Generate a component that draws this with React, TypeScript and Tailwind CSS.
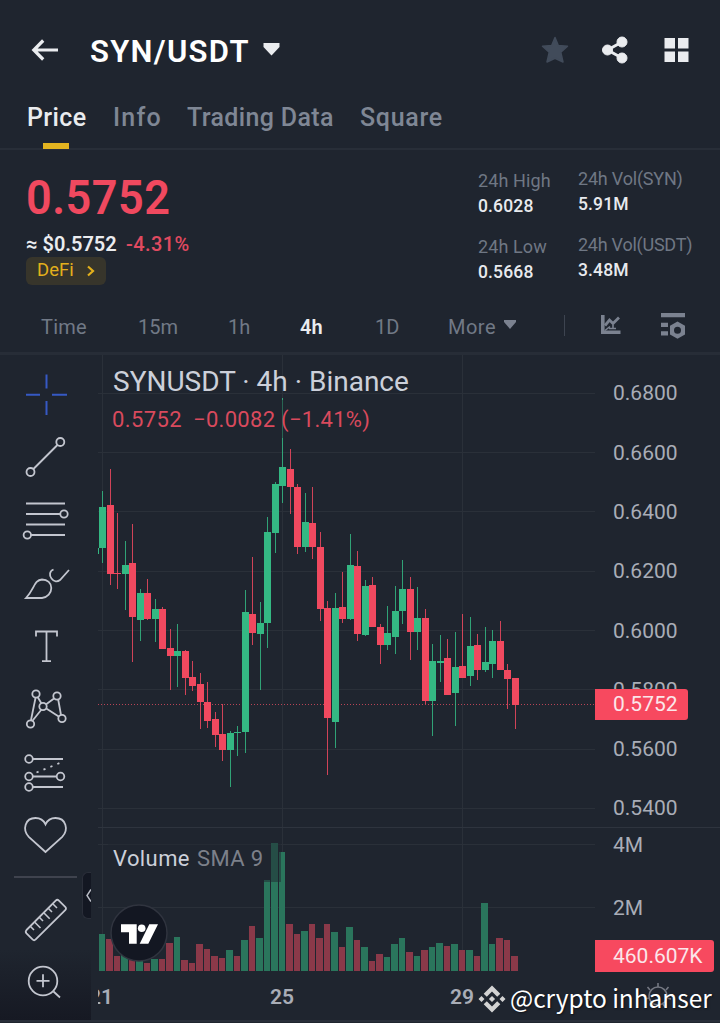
import React from "react";

type Candle = [dir: "u" | "d", high: number, top: number, bottom: number, low: number];

const UP = "#34b883";
const DOWN = "#f0495f";

const candles: Candle[] = [
  ["u", 491.3, 506.7, 548.3, 563.3],
  ["d", 469.3, 505.3, 574.3, 584.7],
  ["d", 513.3, 573, 574.3, 588.7],
  ["u", 540.7, 564.7, 574, 610],
  ["d", 524.3, 562.7, 617.3, 662.3],
  ["u", 588.7, 592.7, 619.7, 640.7],
  ["d", 579.3, 592.7, 619, 620],
  ["u", 599.3, 608.7, 618.7, 641.7],
  ["d", 607.3, 608.7, 648.7, 648.7],
  ["d", 629.3, 647.7, 655.7, 690.3],
  ["u", 624.3, 650.7, 655.7, 686.7],
  ["d", 650.3, 650.7, 677.7, 694.7],
  ["d", 661.3, 677, 685.7, 690.7],
  ["d", 673.3, 683.7, 702.3, 728.7],
  ["d", 682.3, 702.3, 721, 727.7],
  ["d", 712.3, 718.7, 735.3, 746.7],
  ["d", 704, 733.7, 749.7, 760.7],
  ["u", 731.3, 732.7, 750, 786.7],
  ["u", 726.3, 732, 733, 755.7],
  ["u", 590.3, 612.3, 732, 752.7],
  ["d", 557.3, 614.3, 632.7, 644.7],
  ["u", 601.7, 622.7, 633.7, 689.7],
  ["u", 517.3, 531.7, 623, 647.7],
  ["u", 481.7, 483.7, 532.7, 553.3],
  ["u", 398.3, 466.7, 485.7, 502.7],
  ["d", 448.7, 468.7, 487.3, 513.7],
  ["d", 483.7, 487.3, 547.3, 553.7],
  ["u", 492.7, 521.7, 547.3, 551.7],
  ["d", 487.3, 522.7, 547.3, 559.3],
  ["d", 531.7, 546.7, 608.7, 620.7],
  ["d", 601.3, 607.7, 717.7, 774.7],
  ["u", 593.3, 607.7, 721.7, 747.7],
  ["d", 572.3, 607.3, 618.7, 622.7],
  ["u", 534.3, 564.7, 618.7, 619.7],
  ["d", 551.3, 566.3, 634, 641.3],
  ["u", 580.3, 585.7, 634.7, 635.7],
  ["d", 577.3, 584.7, 627, 627],
  ["d", 623.7, 627.3, 644.7, 663.7],
  ["u", 605.7, 632.7, 644.7, 649.7],
  ["u", 586.3, 611.3, 636.7, 653.7],
  ["u", 560.3, 589.3, 610.7, 623.7],
  ["d", 577.3, 589.3, 631.7, 659.7],
  ["u", 586.7, 618.3, 631.7, 649.7],
  ["d", 609.3, 618.3, 700.7, 704.3],
  ["u", 643.7, 660.7, 700.7, 735.7],
  ["u", 635.3, 660.7, 663.3, 681.7],
  ["d", 639.3, 658.3, 694.7, 694.7],
  ["u", 632.3, 666.7, 692.7, 725.7],
  ["d", 614.3, 666.3, 677.7, 677.7],
  ["u", 617.3, 646.3, 676.3, 685.7],
  ["d", 634.3, 645.3, 669.7, 679.7],
  ["u", 627.3, 661.7, 669.7, 672.3],
  ["u", 630.3, 641.3, 663.7, 677.7],
  ["d", 621.3, 641.3, 669.7, 669.7],
  ["d", 664.3, 669.7, 678.7, 708.7],
  ["d", 678.3, 678.3, 704.7, 728.7],
];

const volumes = [
  37, 31.5, 15, 16, 12, 9.5, 7.5, 12, 11.5, 27.5, 33.5, 11, 7.5, 26.5, 21.5, 14.5, 12.5, 20.5, 15, 31, 45, 32.5,
  90.5, 128, 119, 47, 37, 40, 46.5, 32.5, 47, 39, 23.5, 43.5, 31, 23.5, 10, 17, 13.5, 27, 32.5, 18.5, 15, 20.5, 24,
  27.5, 25, 26.5, 20.5, 20.5, 15, 67.5, 26.5, 32.5, 30.5, 15,
];

const gridRows = [393, 452, 511, 571, 630, 689, 749, 808, 844, 907];

function Chart() {
  return (
    <svg className="block h-[665px] w-[622px]" viewBox="98 355 622 665" shapeRendering="crispEdges">
      {gridRows.map((y) => (
        <rect key={y} x={98} y={y} width={497} height={1} fill="#2a3039" />
      ))}
      {[102, 282, 462].map((x) => (
        <rect key={x} x={x} y={355} width={1} height={616} fill="#2a3039" />
      ))}
      <rect x={98} y={827} width={622} height={1} fill="#2e343e" />
      {volumes.map((h, i) => (
        <rect
          key={i}
          x={Math.floor(99 + 7.5 * i)}
          y={971 - Math.round(h)}
          width={i % 2 ? 7 : 6}
          height={Math.round(h)}
          fill={i === 18 || i === 6 ? "#8a3949" : candles[i][0] === "u" ? "#2a755c" : "#8a3949"}
        />
      ))}
      <line x1={98} x2={595} y1={704.5} y2={704.5} stroke="#b84456" strokeDasharray="1 2" />
      <rect x={98} y={548} width={1} height={6} fill={UP} />
      {candles.map(([dir, high, top, bottom, low], i) => {
        const x = 102 + Math.ceil(7.5 * i);
        const t = Math.round(top);
        const fill = dir === "u" ? UP : DOWN;
        return (
          <g key={i} fill={fill}>
            <rect x={x} y={Math.round(high)} width={1} height={Math.round(low) - Math.round(high)} opacity={0.85} />
            <rect x={x - 3} y={t} width={7} height={Math.max(1, Math.round(bottom) - t)} />
          </g>
        );
      })}
    </svg>
  );
}

function Tool({ cy, children }: { cy: number; children: React.ReactNode }) {
  return (
    <svg
      className="block h-[63px] w-[91px] shrink-0"
      viewBox={`0 ${cy - 31.5} 91 63`}
      fill="none"
      stroke="#c3c6cf"
      strokeWidth={1.8}
    >
      {children}
    </svg>
  );
}

function Toolbar() {
  return (
    <div className="relative flex h-[665px] w-[98px] shrink-0 flex-col pt-[8px]">
      <Tool cy={394.5}>
        <path d="M46.5 374.5v14M46.5 401v14M26 394.7h14M52 394.7h15" stroke="#3659c4" strokeWidth={2} />
      </Tool>
      <Tool cy={457.5}>
        <circle cx={60.3} cy={442} r={4} />
        <circle cx={30.5} cy={472} r={4} />
        <path d="M57.4 445 33.4 469" />
      </Tool>
      <Tool cy={520.5}>
        <path d="M26 503.5h39M26 514h34M26 524.5h39M31 535h34" />
        <circle cx={64} cy={514} r={3.7} />
        <circle cx={27.3} cy={535} r={3.7} />
      </Tool>
      <Tool cy={583.5}>
        <path d="M26 598H42C47.5 597.500 51.300 593 51.300 588C51.300 583 47.500 579.500 42 579.500C34 580 34.500 589 26 598Z" />
        <path d="M53.500 569.500C49.500 571 49 575.500 51.500 578.500C54 582 57.500 582 60 580L69 570" />
      </Tool>
      <Tool cy={646.5}>
        <path d="M36 636.500V631.500H57V636.500M46.500 631.500V661M42 661.200H51" />
      </Tool>
      <Tool cy={709.5}>
        <path d="M37.800 697.300 41.300 703.200M54 698.500 46.200 704.300M58.200 699.500 61 715M35.500 698 31 720M32.500 720.700 41.300 709.800M46.300 708.500 58.700 716.500" />
        <circle cx={36} cy={694} r={3.7} />
        <circle cx={57} cy={696} r={3.7} />
        <circle cx={43} cy={706.5} r={3.7} />
        <circle cx={30.5} cy={724} r={3.7} />
        <circle cx={62} cy={718.5} r={3.7} />
      </Tool>
      <Tool cy={772.5}>
        <path d="M33 759H63M33 776.500H56.500M33 787H63" />
        <path d="M36.500 772.500 61 762.500" strokeDasharray="2.200 5.300" />
        <circle cx={29} cy={759} r={3.8} />
        <circle cx={29} cy={776.5} r={3.8} />
        <circle cx={60.5} cy={776.5} r={3.8} />
        <circle cx={29} cy={787} r={3.8} />
      </Tool>
      <Tool cy={835.5}>
        <path d="M45.500 852 28.800 836.800C22 829.500 25 818 35.500 818C40 818 43.500 820 45.500 824.300C47.500 820 51 818 55.500 818C66 818 69 829.500 62.200 836.800Z" />
      </Tool>
      <div className="mt-[9px] mb-[10px] ml-[14px] h-[2px] w-[63px] shrink-0 bg-[#3f434e]" />
      <Tool cy={919.5}>
        <path d="M26.500 930 55.700 900.600Q57.300 899 58.900 900.600L65.200 906.900Q66.800 908.500 65.200 910.100L35.700 939.400Q34.100 941 32.500 939.400L26.500 933.300Q25 931.700 26.500 930Z" />
        <path d="M30.500 926.500 34 930M34.800 922.200 40.500 928M39.500 917.500 43 921M44 913 49.700 918.700M48.500 908.500 52 912M53 904 57 908" strokeWidth={1.6} />
      </Tool>
      <Tool cy={982.5}>
        <circle cx={43} cy={981} r={14.3} />
        <path d="M36.500 980.800H49.500M43 974.300V987.300M53.500 991.500 60 997.500" />
      </Tool>
      <div className="absolute bottom-0 left-0 -z-10 h-[70px] w-[91px] bg-gradient-to-b from-[#1f252f] to-[#161923]" />
      <div className="absolute top-[517px] left-[82px] h-[47px] w-[9px] overflow-hidden rounded-l-[6px] border border-r-0 border-[#2a2e39] bg-[#131722]">
        <svg className="mt-[16px] ml-[3px] block h-[13px] w-[5px]" viewBox="0 0 5 13" fill="none" stroke="#b8bbc4" strokeWidth={1.5}>
          <path d="M5 .5 1 6.500 5 12.500" />
        </svg>
      </div>
    </div>
  );
}

function Stat({ label, value, labelClass }: { label: string; value: string; labelClass: string }) {
  return (
    <div className="h-[66px] whitespace-nowrap">
      <div className={"h-[26px] text-[18px] leading-[26px] text-[#6f7784] " + labelClass}>{label}</div>
      <div className="h-[26px] text-[17.500px] leading-[25px] font-medium tracking-[0.150px] text-[#e8eaee]">{value}</div>
    </div>
  );
}

export default function App() {
  return (
    <div
      className="relative isolate flex h-[1023px] w-[720px] flex-col overflow-hidden bg-[#1f252f]"
      style={{ fontFamily: 'Roboto, "Noto Sans", sans-serif' }}
    >
      <header className="flex h-[100px] shrink-0 items-center pl-[31px]">
        <svg className="block h-[24px] w-[28px]" viewBox="0 0 28 24" fill="none" stroke="#eaecef" strokeWidth={3.2}>
          <path d="M27 12H3M12.200 2.500 2.800 12 12.200 21.500" />
        </svg>
        <h1 className="mt-[4px] ml-[31px] w-[173px] text-[31px] leading-[40px] font-semibold tracking-[1.300px] whitespace-nowrap text-white">
          SYN/USDT
        </h1>
        <svg className="mt-[-2px] block h-[13px] w-[17px]" viewBox="0 0 17 13" fill="#eaecef">
          <path d="M.5 0H16.500V4L8.500 12.500.5 4Z" />
        </svg>
        <svg className="ml-[261px] block h-[28px] w-[28px]" viewBox="0 0 28 28" fill="#414b5a" stroke="#414b5a" strokeWidth={1.5} strokeLinejoin="round">
          <path d="M14 1.500 17.300 9.500 26.500 10.300 19.800 16.300 22 26 14 22.300 6 26 8.200 16.300 1.500 10.300 10.700 9.500Z" />
        </svg>
        <svg className="ml-[33px] block h-[28px] w-[26px]" viewBox="0 0 26 28" fill="#eaecef" stroke="#eaecef">
          <circle cx={5.500} cy={14} r={5} />
          <circle cx={20} cy={6} r={5} />
          <circle cx={20} cy={22} r={5} />
          <path d="M20 6 5.500 14 20 22" strokeWidth={3} fill="none" />
        </svg>
        <svg className="ml-[36px] block h-[26px] w-[26px]" viewBox="0 0 26 26" fill="#eaecef">
          <path d="M.5 1H11V11.500H.5ZM14 1H24.500V11.500H14ZM.5 14.500H11V25H.5ZM14 14.500H24.500V25H14Z" />
        </svg>
      </header>

      <nav className="flex h-[50px] shrink-0 border-b-2 border-[#282e38] pl-[27px] text-[25px] leading-[36px] font-medium whitespace-nowrap text-[#7f8795]">
        <div className="flex h-[48px] w-[86px] flex-col text-[#eaecef]">
          <span className="tracking-[0.400px]">Price</span>
          <span className="mt-[7px] ml-[16px] h-[6px] w-[26px] shrink-0 bg-[#e3b420]" />
        </div>
        <span className="w-[74px] tracking-[1.200px]">Info</span>
        <span className="w-[173px] tracking-[0.350px]">Trading Data</span>
        <span className="tracking-[0.700px]">Square</span>
      </nav>

      <section className="flex h-[150px] shrink-0 pl-[26px]">
        <div className="flex w-[452px] flex-col whitespace-nowrap">
          <div className="mt-[21px] h-[54px] w-[160px] origin-left scale-x-[0.920] text-[49px] leading-[54px] font-semibold tracking-[0.500px] text-[#f0495f]">
            0.5752
          </div>
          <div className="mt-[7px] flex h-[25px] text-[20px] leading-[25px]">
            <span className="w-[100px] font-semibold text-[#eaecef]">≈ $0.5752</span>
            <span className="font-medium tracking-[0.400px] text-[#e04a60]">-4.31%</span>
          </div>
          <div className="flex h-[28px] w-[80px] items-center rounded-[6px] bg-[#37352b] pl-[11px] text-[18.500px] text-[#e3b01c]">
            <span className="w-[50px]">DeFi</span>
            <svg className="block h-[12px] w-[8px]" viewBox="0 0 8 12" fill="none" stroke="#e3b01c" strokeWidth={2.2}>
              <path d="M1 1.500 6 6 1 10.500" />
            </svg>
          </div>
        </div>
        <div className="flex w-[100px] flex-col pt-[18px]">
          <Stat label="24h High" value="0.6028" labelClass="tracking-[0.100px]" />
          <Stat label="24h Low" value="0.5668" labelClass="tracking-[0.100px]" />
        </div>
        <div className="flex flex-col pt-[16px]">
          <Stat label="24h Vol(SYN)" value="5.91M" labelClass="tracking-[-0.200px]" />
          <Stat label="24h Vol(USDT)" value="3.48M" labelClass="tracking-[-0.250px]" />
        </div>
      </section>

      <div className="flex h-[55px] shrink-0 items-center border-b-[3px] border-[#272d37] pl-[41px] text-[20px] leading-[24px] whitespace-nowrap text-[#717986]">
        <span className="mt-[2px] w-[97px] tracking-[0.200px]">Time</span>
        <span className="mt-[2px] w-[90px]">15m</span>
        <span className="mt-[2px] w-[72px]">1h</span>
        <span className="mt-[2px] w-[75px] font-semibold text-[#eaecef]">4h</span>
        <span className="mt-[2px] w-[73px]">1D</span>
        <span className="mt-[2px] w-[56px] tracking-[0.500px]">More</span>
        <svg className="mt-[-3px] block h-[9px] w-[12px]" viewBox="0 0 12 9" fill="#7b8290">
          <path d="M0 0H12V2L6 9 0 2Z" />
        </svg>
        <div className="mt-[-2px] ml-[48px] h-[21px] w-px bg-[#3d4450]" />
        <svg className="mt-[-2px] ml-[36px] block h-[20px] w-[20px]" viewBox="0 0 20 20" fill="none" stroke="#7b8290">
          <path d="M1.800 0V17.300H19.500" strokeWidth={3.6} />
          <path d="M4 10.500 8.500 5 12 8.500 18 2.500" strokeWidth={2.8} />
          <path d="M4 15.500 9 11.500M8 13.500H15M12 10V13.500" strokeWidth={1.600} />
        </svg>
        <svg className="ml-[40px] block h-[26px] w-[26px]" viewBox="0 0 26 26" fill="#7b8290">
          <path d="M0 0H24V4.200H0ZM0 9.700H7V14H0ZM0 18.200H7V22.500H0Z" />
          <path
            fillRule="evenodd"
            d="M16.500 8.500 24 12.800V21.500L16.500 25.800 9 21.500V12.800ZM16.500 13.700A3.500 3.500 0 1 0 16.500 20.700A3.500 3.500 0 1 0 16.500 13.700Z"
          />
        </svg>
      </div>

      <main className="flex h-[665px] shrink-0">
        <Toolbar />
        <div className="relative w-[622px]">
          <Chart />
          <div className="absolute top-[10px] left-[15px] text-[28px] leading-[33px] whitespace-nowrap text-[#ccd0da]">
            SYNUSDT · 4h · Binance
          </div>
          <div className="absolute top-[45px] left-[10px] flex h-[38px] items-center bg-[#1f252f]/50 pr-[6px] pl-[4px] text-[22px] whitespace-nowrap text-[#d94a5d]">
            <span className="w-[81px] tracking-[0.400px]">0.5752</span>
            <span className="tracking-[0.300px]">−0.0082 (−1.41%)</span>
          </div>
          <div className="absolute top-[480px] left-[10px] flex h-[47px] w-[173px] items-center bg-[#1f252f]/50 pl-[5px] text-[22px] whitespace-nowrap text-[#ccd0da]">
            <span className="w-[84px] tracking-[0.400px]">Volume</span>
            <span className="tracking-[0.400px] text-[#7c808a]">SMA 9</span>
          </div>

          <div className="absolute top-[9.500px] left-[515px] flex flex-col text-[21px] text-[#a9adb7]">
            {["0.6800", "0.6600", "0.6400", "0.6200", "0.6000", "0.5800", "0.5600", "0.5400"].map((p) => (
              <span key={p} className="flex h-[59.300px] items-center">{p}</span>
            ))}
          </div>
          <div className="absolute top-[459px] left-[515px] flex flex-col text-[21px] text-[#a9adb7]">
            <span className="flex h-[63px] items-center">4M</span>
            <span className="flex h-[63px] items-center">2M</span>
          </div>
          <div className="absolute top-[334px] left-[497px] flex h-[31px] w-[93px] items-center rounded-r-[3px] bg-[#f7495f] pt-px pl-[18px] text-[21px] text-[#fbe6ea]">0.5752</div>
          <div className="absolute top-[585px] left-[497px] flex h-[32px] w-[119px] items-center rounded-r-[3px] bg-[#f7495f] pt-[2px] pl-[18px] text-[21px] text-[#fbe6ea]">460.607K</div>

          <svg className="absolute top-[549px] left-[12px] h-[58px] w-[58px]" viewBox="110 904 58 58">
            <circle cx={139} cy={933} r={28} fill="#131722" stroke="#30343f" strokeWidth={1.5} />
            <path d="M121 924.300H136.700V943.700H129V932.300H121ZM149.300 924.300H158L148.300 943.700H139.700Z" fill="#fff" />
            <circle cx={141.700} cy={928.300} r={3.800} fill="#fff" />
          </svg>

          <div className="absolute top-[628px] left-0 h-[28px] w-[40px] overflow-hidden text-[21px] leading-[28px] font-semibold text-[#a9adb7]">
            <span className="relative left-[-9px]">21</span>
          </div>
          <div className="absolute top-[628px] left-[172px] text-[21px] leading-[28px] font-semibold text-[#a9adb7]">25</div>
          <div className="absolute top-[628px] left-[352px] text-[21px] leading-[28px] font-semibold text-[#a9adb7]">29</div>

          <svg className="absolute top-[626px] left-[544px] h-[30px] w-[32px]" viewBox="642 981 32 30" fill="none" stroke="#747882" strokeWidth={1.600}>
            <circle cx={658} cy={996} r={9} />
            <path d="M658 987V983M666 990 668.500 987M650 990 647.500 987M667 998 671 999M649 998 645 999M663 1004 665 1007M653 1004 651 1007" />
          </svg>
          <svg className="absolute top-[630px] left-[380px] h-[28px] w-[28px]" viewBox="-14 -14 28 28" fill="#d3d3d3">
            <path d="M0-13.500 8.300-5.200 5.200-2.200 0-7.400-5.200-2.200-8.300-5.200ZM0 13.500 8.300 5.200 5.200 2.200 0 7.400-5.200 2.200-8.300 5.200ZM0-3.100 3.100 0 0 3.100-3.100 0ZM-10.500-3-7.500 0-10.500 3-13.500 0ZM10.500-3 13.500 0 10.500 3 7.500 0Z" />
          </svg>
          <div
            className="absolute top-[625px] left-[412px] text-[24.500px] leading-[36px] font-normal tracking-[-0.050px] whitespace-nowrap text-white [text-shadow:1px_1px_2px_#0008]"
            style={{ fontFamily: '"Noto Sans CJK SC", "Noto Sans", sans-serif' }}
          >
            @crypto inhanser
          </div>
        </div>
      </main>
      <div className="h-[2px] shrink-0 bg-[#292e3a]" />
    </div>
  );
}
